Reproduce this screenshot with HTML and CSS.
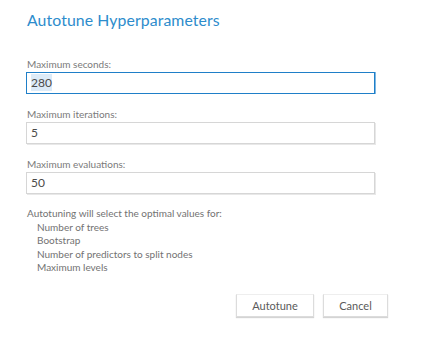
FILE: index.html
```html
<!DOCTYPE html>
<html>
<head>
<meta charset="utf-8">
<link rel="stylesheet" href="styles.css">
</head>
<body>
<div class="dialog">
  <h1 class="title">Autotune Hyperparameters</h1>
  <div class="fields">
    <div class="field">
      <label class="label">Maximum seconds:</label>
      <div class="input focused"><span class="sel">280</span></div>
    </div>
    <div class="field">
      <label class="label">Maximum iterations:</label>
      <div class="input">5</div>
    </div>
    <div class="field">
      <label class="label">Maximum evaluations:</label>
      <div class="input">50</div>
    </div>
  </div>
  <div class="note">
    <div>Autotuning will select the optimal values for:</div>
    <div class="item">Number of trees</div>
    <div class="item">Bootstrap</div>
    <div class="item">Number of predictors to split nodes</div>
    <div class="item">Maximum levels</div>
  </div>
  <div class="buttons">
    <button class="btn btn-auto">Autotune</button>
    <button class="btn btn-cancel">Cancel</button>
  </div>
</div>
</body>
</html>
```
FILE: styles.css
```css
html, body {
  margin: 0;
  padding: 0;
  background: #ffffff;
}
.dialog {
  width: 437px;
  height: 349px;
  box-sizing: border-box;
  padding: 11px 0 0 26px;
  font-family: Lato, "Open Sans", sans-serif;
  color: #6b6b6b;
}
.title {
  margin: 0 0 0 1px;
  font-family: Lato, sans-serif;
  font-weight: 400;
  font-size: 15.8px;
  line-height: 18px;
  color: #2d8ccc;
  letter-spacing: 0.1px;
}
.fields {
  margin-top: 29px;
  display: flex;
  flex-direction: column;
  gap: 14px;
}
.field {
  display: flex;
  flex-direction: column;
}
.label {
  font-size: 10px;
  line-height: 12px;
  color: #7a7a7a;
  margin-left: 1px;
  margin-bottom: 2px;
}
.input {
  width: 349px;
  height: 22px;
  box-sizing: border-box;
  border: 1px solid #d6d6d6;
  box-shadow: 1px 1px 0 #e8e8e8;
  font-size: 12px;
  line-height: 20px;
  padding-left: 4px;
  color: #4a4a4a;
}
.input.focused {
  border-color: #1f7fc8;
  box-shadow: 1px 0 0 #7fb8e4;
}
.sel {
  background: #dcebf8;
  padding: 1px 0;
}
.note {
  margin-top: 13px;
  margin-left: 1px;
  font-size: 10px;
  line-height: 13.5px;
  color: #727272;
}
.item {
  padding-left: 10px;
}
.buttons {
  margin-top: 19px;
  margin-left: 210px;
  display: flex;
  gap: 9px;
}
.btn {
  height: 23px;
  box-sizing: border-box;
  background: #ffffff;
  border: 1px solid #dcdcdc;
  border-top-color: #eeeeee;
  box-shadow: 0 1px 1px #d4d4d4;
  font-family: Lato, sans-serif;
  font-size: 11px;
  color: #5a5a5a;
  padding: 0;
}
.btn-auto {
  width: 78px;
}
.btn-cancel {
  width: 65px;
}
```
